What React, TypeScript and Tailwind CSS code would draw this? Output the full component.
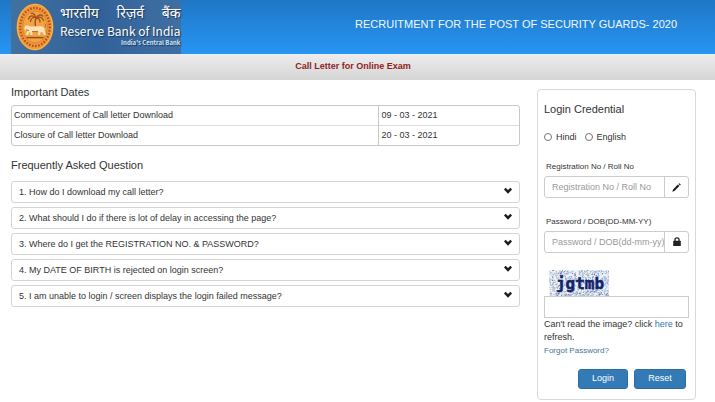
import { useState } from 'react';

const dates = [
  { label: 'Commencement of Call letter Download', date: '09 - 03 - 2021' },
  { label: 'Closure of Call letter Download', date: '20 - 03 - 2021' },
];

const questions = [
  'How do I download my call letter?',
  'What should I do if there is lot of delay in accessing the page?',
  'Where do I get the REGISTRATION NO. & PASSWORD?',
  'My DATE OF BIRTH is rejected on login screen?',
  'I am unable to login / screen displays the login failed message?',
];

function Emblem() {
  return (
    <svg className="w-[38px] h-12 shrink-0" viewBox="0 0 38 48" fill="none" aria-hidden="true">
      <ellipse cx="19" cy="24" rx="18.5" ry="23.5" fill="#d9822b" />
      <ellipse cx="19" cy="24" rx="17.6" ry="22.6" fill="#ee9a3a" stroke="#fbc765" strokeWidth="0.8" />
      <ellipse cx="19" cy="24" rx="14.8" ry="19" stroke="#b9501f" strokeWidth="2.4" strokeDasharray="1.6 1.5" />
      <ellipse cx="19" cy="24" rx="12.4" ry="16" fill="#f3a442" stroke="#d0702c" strokeWidth="0.6" />
      {/* palm tree */}
      <path d="M19.4 23 C19 20 19.2 17 19.8 15" stroke="#9a4a1c" strokeWidth="1.3" />
      <path d="M20 15.5 C17 11.5 13.5 12.5 12.5 16 M20 15.5 C18 13 15 15 14.5 18.5 M20 15.5 C19 11 17 10 15.5 10.5 M20 15.5 C22 11 25 11.5 26.5 13 M20 15.5 C23.5 13 26.5 14.5 27.5 17.5 M20 15.5 C22.5 14.5 24 16.5 24 19" stroke="#a4521f" strokeWidth="1.4" strokeLinecap="round" />
      {/* tiger */}
      <path d="M8.5 24.2 C9.2 22.5 11.5 22.3 13 23 C17 24.2 22 22.8 26 23.4 C28.5 23.8 29 26 28.6 27.6 L30 32 L28 32 L26.2 29 L24.6 29 L24 32 L22 32 L22.4 28.4 L16.5 28.4 L16.3 32 L14.4 32 L14 28.6 L11.6 32 L9.6 32 L11.6 27.6 L8.6 27 Z" fill="#fbe3b8" />
      <path d="M28.5 24.5 C30 24 30 21.5 28.6 20.5 M10 26.6 L13 27.6 M16 28.6 H22" stroke="#a4521f" strokeWidth="0.8" />
      <path d="M10.5 34.6 H27.5" stroke="#9a4a1c" strokeWidth="1.5" />
    </svg>
  );
}

function ChevronIcon() {
  return (
    <svg className="w-2 h-2 shrink-0 mb-1" viewBox="0 0 8 8" aria-hidden="true">
      <path d="M1.6 0.8 L4 3 L6.4 0.8 L8 2.6 L4 6.8 L0 2.6 Z" fill="#1c1c1c" />
    </svg>
  );
}

function PencilIcon() {
  return (
    <svg className="w-[9px] h-[9px]" viewBox="0 0 9 9" fill="#1a1a1a" aria-hidden="true">
      <path d="M7.3 0.2 L8.8 1.6 L8 2.5 L6.5 1.1 Z M5.9 1.6 L7.4 3 L2.4 7.9 L0.3 8.8 L1.1 6.6 Z" />
    </svg>
  );
}

function LockIcon() {
  return (
    <svg className="w-2 h-[9px] mb-0.5" viewBox="0 0 8 9" aria-hidden="true">
      <path d="M2 4.5 V2.6 C2 0.2 6 0.2 6 2.6 V4.5" fill="none" stroke="#222" strokeWidth="1.3" />
      <rect x="0.2" y="3.8" width="7.6" height="5.2" rx="0.5" fill="#222" />
    </svg>
  );
}

// Speckles come from a fixed seed so the image does not change between renders
function makeSpeckles(count: number, width: number, height: number) {
  let seed = 7919;
  const next = () => {
    seed = (seed * 16807) % 2147483647;
    return seed / 2147483647;
  };
  const colors = ['#6d86bf', '#4a64a0', '#9db2d6', '#8fa39c', '#b9c6de', '#a9bbdc'];
  return Array.from({ length: count }, () => ({
    x: next() * width,
    y: next() * height,
    color: colors[Math.floor(next() * colors.length)],
  }));
}

const speckles = makeSpeckles(760, 60, 26);

function Captcha() {
  return (
    <svg className="block w-[60px] h-[26px] ml-[5px]" viewBox="0 0 60 26" role="img" aria-label="Security code">
      <rect width="60" height="26" fill="#eef2f8" />
      {speckles.map((s, i) => (
        <rect key={i} x={s.x} y={s.y} width="0.9" height="0.9" fill={s.color} />
      ))}
      <text x="31" y="19" textAnchor="middle" fontSize="16" fontWeight="700" fill="#14246b" stroke="#14246b" strokeWidth="0.5" className="font-['DejaVu_Sans_Mono',monospace]">
        jgtmb
      </text>
    </svg>
  );
}

function Header() {
  return (
    <header>
      <div className="flex items-center justify-between h-[54px] pl-[11px] pr-[38px] bg-linear-to-b from-[#1f77c6] to-[#2795f3]">
        <div className="flex items-center gap-1.5 h-full pl-[5px] pr-px bg-linear-to-r from-[#41719f] via-[#316199] to-[#4070a2]">
          <Emblem />
          <div className="flex flex-col text-white whitespace-nowrap [text-shadow:1px_1px_1px_#1b3557]">
            <span className="flex justify-between text-[14px] leading-[18px] font-['Noto_Sans_Devanagari','Noto_Sans',sans-serif]">
              <span>भारतीय</span>
              <span>रिज़र्व</span>
              <span>बैंक</span>
            </span>
            <span className="text-[12px] leading-[14px] font-['Noto_Sans_CJK_SC',sans-serif]">Reserve Bank of India</span>
            <span className="text-[6px] leading-[10px] font-bold text-right text-[#d3e6f6] font-['Noto_Sans_CJK_SC',sans-serif]">India's Central Bank</span>
          </div>
        </div>
        <h1 className="pb-1.5 text-[11px] leading-4 text-[#f2f8ff] whitespace-nowrap">RECRUITMENT FOR THE POST OF SECURITY GUARDS- 2020</h1>
      </div>
      <div className="h-[26px] pt-1 pr-[9px] bg-linear-to-b from-[#ededed] to-[#d5d5d5] text-center">
        <h2 className="text-[9px] leading-4 font-bold text-[#8f1d24]">Call Letter for Online Exam</h2>
      </div>
    </header>
  );
}

function LoginForm() {
  const [language, setLanguage] = useState('');

  return (
    <form
      className="w-[159px] shrink-0 mt-[9px] px-1.5 pt-[11px] pb-[10px] border border-[#d9d9d9] rounded-[4px]"
      onSubmit={(e) => e.preventDefault()}
    >
      <h3 className="text-[11px] leading-4">Login Credential</h3>
      <div className="flex gap-2 mt-3 text-[9px] leading-4">
        {['Hindi', 'English'].map((name) => (
          <label key={name} className="flex items-center gap-1">
            <input
              type="radio"
              name="language"
              className="appearance-none w-2 h-2 border border-[#767676] rounded-full bg-white checked:bg-[#337ab7]"
              checked={language === name}
              onChange={() => setLanguage(name)}
            />
            {name}
          </label>
        ))}
      </div>

      <label htmlFor="regno" className="block mt-4 pl-0.5 text-[8px] leading-3">Registration No / Roll No</label>
      <div className="flex h-[22px] mt-[3px] border border-[#ccc] rounded-[3px]">
        <input id="regno" type="text" placeholder="Registration No / Roll No" className="flex-1 min-w-0 pt-0.5 pl-[7px] text-[9px] placeholder:text-[#999] outline-none" />
        <span className="flex items-center justify-center w-6 border-l border-[#ccc]"><PencilIcon /></span>
      </div>

      <label htmlFor="password" className="block mt-[18px] pl-0.5 text-[8px] leading-3">Password / DOB(DD-MM-YY)</label>
      <div className="flex h-[22px] mt-[3px] border border-[#ccc] rounded-[3px]">
        <input id="password" type="password" placeholder="Password / DOB(dd-mm-yy)" className="flex-1 min-w-0 pt-0.5 pl-[7px] text-[9px] placeholder:text-[#999] outline-none" />
        <span className="flex items-center justify-center w-6 border-l border-[#ccc]"><LockIcon /></span>
      </div>

      <div className="mt-[17px]">
        <Captcha />
        <input type="text" aria-label="Security code" className="block w-full h-[22px] px-2 border border-[#ccc] text-[9px] outline-none" />
      </div>
      <p className="text-[9px] leading-[13px]">
        Can't read the image? click <a href="#refresh" className="text-[#337ab7]">here</a> to refresh.
      </p>
      <a href="#forgot" className="block text-[8px] leading-[13px] text-[#4a7396]">Forgot Password?</a>

      <div className="flex justify-end gap-1.5 mt-3 pr-[3px] text-[9px] text-white">
        <button type="submit" className="w-[50px] h-5 rounded-[3px] border border-[#2e6da4] bg-[#337ab7]">Login</button>
        <button type="reset" className="w-[52px] h-5 rounded-[3px] border border-[#2e6da4] bg-[#337ab7]" onClick={() => setLanguage('')}>Reset</button>
      </div>
    </form>
  );
}

export default function App() {
  return (
    <div className="bg-white text-[#333] font-['Liberation_Sans',Arial,sans-serif]">
      <Header />
      <main className="flex items-start gap-[17px] pl-[11px] pr-[19px]">
        <div className="flex-1 min-w-0">
          <section>
            <h3 className="mt-1 text-[11px] leading-4">Important Dates</h3>
            <div className="mt-[5px] border border-[#c8c8c8] rounded-[3px]">
              <table className="w-full text-[9px] leading-[19px] border-collapse">
                <tbody>
                  {dates.map((row) => (
                    <tr key={row.label} className="border-b border-[#ddd] last:border-b-0">
                      <td className="pl-0.5">{row.label}</td>
                      <td className="w-[141px] pl-[3px] border-l border-[#c8c8c8]">{row.date}</td>
                    </tr>
                  ))}
                </tbody>
              </table>
            </div>
          </section>

          <section>
            <h3 className="mt-[11px] text-[11px] leading-4">Frequently Asked Question</h3>
            <div className="flex flex-col gap-1 mt-2">
              {questions.map((question, i) => (
                <button
                  key={question}
                  type="button"
                  className="flex items-center justify-between h-[22px] pt-0.5 px-[7px] border border-[#d4d4d4] rounded-[3px] text-[9px] text-left"
                >
                  {i + 1}. {question}
                  <ChevronIcon />
                </button>
              ))}
            </div>
          </section>
        </div>
        <LoginForm />
      </main>
    </div>
  );
}
